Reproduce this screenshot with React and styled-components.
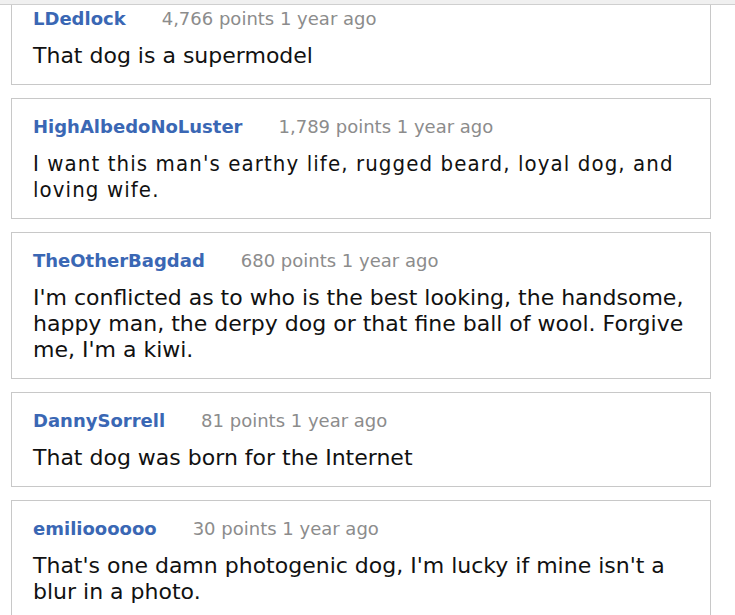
import React from "react";
import styled, { createGlobalStyle } from "styled-components";

const Global = createGlobalStyle`
  html, body { margin: 0; padding: 0; background: #fff; }
  body { font-family: "DejaVu Sans", Verdana, sans-serif; overflow: hidden; }
`;

const TopBar = styled.div`
  position: fixed;
  top: 0;
  left: 0;
  right: 0;
  height: 4px;
  background: #f0f0f0;
  border-bottom: 1px solid #cfcfcf;
  z-index: 2;
`;

const List = styled.div`
  display: flex;
  flex-direction: column;
  gap: 13px;
  margin: -10px 0 0 11px;
  width: 700px;
`;

const Card = styled.div`
  border: 1px solid #c8c8c8;
  background: #fff;
  padding: 18px 21px 15px;
`;

const Header = styled.div`
  display: flex;
  align-items: baseline;
  height: 20px;
  line-height: 20px;
`;

const User = styled.span`
  font-weight: bold;
  font-size: 18px;
  color: #3a67b4;
`;

const Meta = styled.span`
  margin-left: 36px;
  font-size: 18px;
  color: #8c8c8c;
`;

const Body = styled.div`
  margin-top: 14px;
  font-size: 22px;
  line-height: 26px;
  color: #111;
  font-family: ${(p) =>
    p.$condensed
      ? '"DejaVu Sans Condensed", "DejaVu Sans", Verdana, sans-serif'
      : '"DejaVu Sans", Verdana, sans-serif'};
  font-stretch: ${(p) => (p.$condensed ? "semi-condensed" : "normal")};
  letter-spacing: ${(p) => (p.$condensed ? "1.1px" : "0")};
`;

const comments = [
  { user: "LDedlock", points: "4,766", text: "That dog is a supermodel" },
  {
    user: "HighAlbedoNoLuster",
    points: "1,789",
    text: "I want this man's earthy life, rugged beard, loyal dog, and loving wife.",
    condensed: true,
  },
  {
    user: "TheOtherBagdad",
    points: "680",
    text: "I'm conflicted as to who is the best looking, the handsome, happy man, the derpy dog or that fine ball of wool. Forgive me, I'm a kiwi.",
  },
  { user: "DannySorrell", points: "81", text: "That dog was born for the Internet" },
  {
    user: "emilioooooo",
    points: "30",
    text: "That's one damn photogenic dog, I'm lucky if mine isn't a blur in a photo.",
  },
];

export default function App() {
  return (
    <>
      <Global />
      <TopBar />
      <List>
        {comments.map((c) => (
          <Card key={c.user}>
            <Header>
              <User>{c.user}</User>
              <Meta>{c.points} points 1 year ago</Meta>
            </Header>
            <Body $condensed={c.condensed}>{c.text}</Body>
          </Card>
        ))}
      </List>
    </>
  );
}
